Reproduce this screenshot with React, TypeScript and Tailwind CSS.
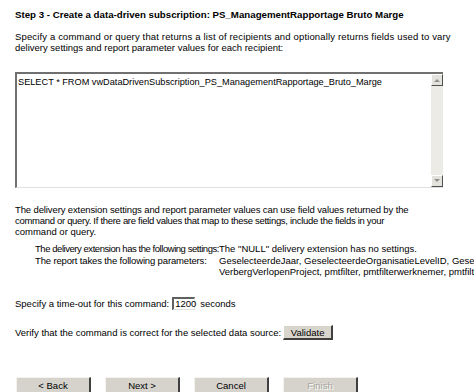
import React from "react";

function Btn({ label, disabled }: { label: string; disabled?: boolean }) {
  return (
    <div className="w-[75px] h-[22px] bg-[#d6d3cc] border-t border-l border-t-[#f4f3ef] border-l-[#f4f3ef] border-r-2 border-r-[#404040] flex justify-center pt-[2px]">
      {disabled ? (
        <span className="text-[#a8a6a0] [text-shadow:1px_1px_0_#ffffff]">{label}</span>
      ) : (
        <span>{label}</span>
      )}
    </div>
  );
}

export default function App() {
  return (
    <div className="w-[474px] h-[392px] overflow-hidden bg-white text-black font-['Liberation_Sans',Arial,sans-serif] text-[9.5px] leading-[11px]">
      <div className="pl-[15px] w-[700px]">
        <div className="pt-[9px] font-bold text-[9.7px] leading-[12px]">
          Step 3 - Create a data-driven subscription: PS_ManagementRapportage Bruto Marge
        </div>
        <div className="mt-[10px] whitespace-nowrap">
          <div className="tracking-[0.15px]">
            Specify a command or query that returns a list of recipients and optionally returns fields used to vary
          </div>
          <div>delivery settings and report parameter values for each recipient:</div>
        </div>
        <div className="mt-[19px] w-[428px] h-[116px] flex border-t-2 border-l-2 border-t-[#707070] border-l-[#707070] border-b border-b-[#e0e0e0]">
          <div className="flex-1 pl-[1px] pt-[2px] text-[9.2px] leading-[12px] whitespace-nowrap">
            SELECT * FROM vwDataDrivenSubscription_PS_ManagementRapportage_Bruto_Marge
          </div>
          <div className="w-[12px] flex flex-col bg-[#ecebe6]">
            <div className="h-[12px] bg-[#e4e2dc] border-t border-l border-t-white border-l-white border-r border-b border-r-[#505050] border-b-[#505050] flex items-center justify-center">
              <svg width="6" height="4" viewBox="0 0 6 4">
                <path d="M0 4 L3 1 L6 4 Z" fill="#909090" />
              </svg>
            </div>
            <div className="flex-1" />
            <div className="h-[12px] bg-[#e4e2dc] border-t border-l border-t-white border-l-white border-r border-b border-r-[#505050] border-b-[#505050] flex items-center justify-center">
              <svg width="6" height="4" viewBox="0 0 6 4">
                <path d="M0 0 L3 3 L6 0 Z" fill="#909090" />
              </svg>
            </div>
          </div>
        </div>
        <div className="mt-[16px] whitespace-nowrap">
          <div className="tracking-[-0.12px]">
            The delivery extension settings and report parameter values can use field values returned by the
          </div>
          <div className="tracking-[-0.3px]">
            command or query. If there are field values that map to these settings, include the fields in your
          </div>
          <div>command or query.</div>
        </div>
        <div className="mt-[6px] pl-[20px] flex flex-col gap-[1px]">
          <div className="flex">
            <div className="w-[184px] shrink-0 whitespace-nowrap tracking-[-0.45px]">
              The delivery extension has the following settings:
            </div>
            <div className="whitespace-nowrap">The "NULL" delivery extension has no settings.</div>
          </div>
          <div className="flex">
            <div className="w-[184px] shrink-0 whitespace-nowrap tracking-[-0.15px]">
              The report takes the following parameters:
            </div>
            <div className="whitespace-nowrap">
              <div>GeselecteerdeJaar, GeselecteerdeOrganisatieLevelID, GeselecteerdeMaand, GeselecteerdeProject,</div>
              <div>VerbergVerlopenProject, pmtfilter, pmtfilterwerknemer, pmtfiltermaand</div>
            </div>
          </div>
        </div>
        <div className="mt-[20px] flex items-center h-[13px]">
          <span>Specify a time-out for this command:</span>
          <div className="ml-[3px] w-[23px] h-[13px] border-t-2 border-l-2 border-t-[#606060] border-l-[#606060] border-b border-r border-b-[#e0e0e0] border-r-[#e0e0e0] leading-[10px] pl-[1px]">
            1200
          </div>
          <span className="ml-[5px]">seconds</span>
        </div>
        <div className="mt-[15px] flex items-center h-[15px]">
          <span>Verify that the command is correct for the selected data source:</span>
          <div className="ml-[2px] w-[50px] h-[15px] bg-[#d8d5cd] border-t border-l border-t-white border-l-white border-r-2 border-b-2 border-r-[#404040] border-b-[#404040] flex items-center justify-center">
            Validate
          </div>
        </div>
        <div className="mt-[37px] flex gap-[14px] pl-[1px]">
          <Btn label="< Back" />
          <Btn label="Next >" />
          <Btn label="Cancel" />
          <Btn label="Finish" disabled />
        </div>
      </div>
    </div>
  );
}
